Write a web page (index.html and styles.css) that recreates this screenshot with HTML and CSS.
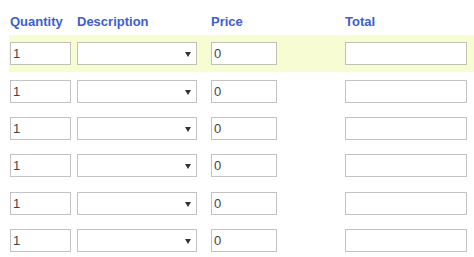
FILE: index.html
```html
<!DOCTYPE html>
<html lang="en">
  <head>
    <meta charset="UTF-8" />
    <meta name="viewport" content="width=device-width, initial-scale=1.0" />
    <title>Invoice lines</title>
    <link rel="stylesheet" href="styles.css">
  </head>
  <body>
    <div class="lines">
      <div class="row head">
        <span>Quantity</span>
        <span>Description</span>
        <span>Price</span>
        <span>Total</span>
      </div>
      <div class="row active">
        <input class="qty" type="text" value="1" />
        <span class="select"><select></select><i></i></span>
        <input class="price" type="text" value="0" />
        <input class="total" type="text" value="" />
      </div>
      <div class="row">
        <input class="qty" type="text" value="1" />
        <span class="select"><select></select><i></i></span>
        <input class="price" type="text" value="0" />
        <input class="total" type="text" value="" />
      </div>
      <div class="row">
        <input class="qty" type="text" value="1" />
        <span class="select"><select></select><i></i></span>
        <input class="price" type="text" value="0" />
        <input class="total" type="text" value="" />
      </div>
      <div class="row">
        <input class="qty" type="text" value="1" />
        <span class="select"><select></select><i></i></span>
        <input class="price" type="text" value="0" />
        <input class="total" type="text" value="" />
      </div>
      <div class="row">
        <input class="qty" type="text" value="1" />
        <span class="select"><select></select><i></i></span>
        <input class="price" type="text" value="0" />
        <input class="total" type="text" value="" />
      </div>
      <div class="row">
        <input class="qty" type="text" value="1" />
        <span class="select"><select></select><i></i></span>
        <input class="price" type="text" value="0" />
        <input class="total" type="text" value="" />
      </div>
    </div>
  </body>
</html>
```

FILE: styles.css
```css
* {
  margin: 0;
  padding: 0;
  box-sizing: border-box;
}
body {
  background: #fff;
  font-family: "Liberation Sans", Arial, sans-serif;
  font-size: 13px;
  color: #444;
}
.lines {
  margin-left: 9px;
}
.row {
  display: grid;
  grid-template-columns: 67px 134px 134px 1fr;
  align-items: center;
  height: 37.4px;
  padding-left: 1px;
}
.row.head {
  height: 35px;
  align-items: start;
  padding-top: 14px;
  line-height: 15px;
  font-weight: 700;
  color: #3c5ecf;
}
.row.active {
  background: #f8fcd2;
}
input,
.select select {
  height: 23px;
  border: 1px solid #c3c3c3;
  background: #fff;
  font-family: inherit;
  font-size: 13px;
  color: #444;
  padding: 0 2px;
  outline: none;
}
.active input,
.active .select select {
  border-color: #c0c3b4;
}
.qty {
  width: 61px;
}
.price {
  width: 66px;
}
.total {
  width: 122px;
}
.select {
  position: relative;
  display: block;
  width: 120px;
  height: 23px;
}
.select select {
  appearance: none;
  -webkit-appearance: none;
  width: 120px;
  border-radius: 0;
}
.select i {
  position: absolute;
  right: 6px;
  top: 10px;
  border-left: 3px solid transparent;
  border-right: 3px solid transparent;
  border-top: 5px solid #333;
}
```
